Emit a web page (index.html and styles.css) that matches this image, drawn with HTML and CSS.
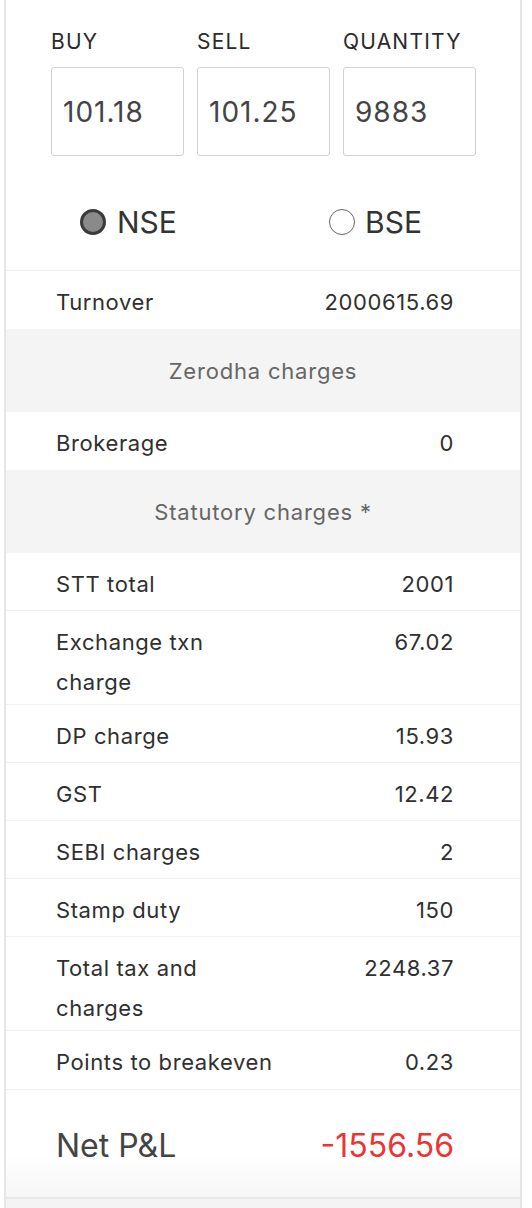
FILE: index.html
```html
<!DOCTYPE html>
<html lang="en">
<head>
    <meta charset="UTF-8">
    <title>Brokerage calculator</title>
    <link rel="stylesheet" href="styles.css">
</head>
<body>
    <div class="calc">
        <!-- inputs -->
        <div class="inputs">
            <div class="field">
                <label for="buy">BUY</label>
                <input type="text" id="buy" value="101.18">
            </div>
            <div class="field">
                <label for="sell">SELL</label>
                <input type="text" id="sell" value="101.25">
            </div>
            <div class="field">
                <label for="qty">QUANTITY</label>
                <input type="text" id="qty" value="9883">
            </div>
        </div>

        <div class="exchange">
            <label class="radio"><span class="dot checked"></span>NSE</label>
            <label class="radio"><span class="dot"></span>BSE</label>
        </div>

        <!-- results -->
        <div class="row"><div class="name">Turnover</div><div class="val">2000615.69</div></div>
        <div class="group">Zerodha charges</div>
        <div class="row"><div class="name">Brokerage</div><div class="val">0</div></div>
        <div class="group">Statutory charges *</div>
        <div class="row"><div class="name">STT total</div><div class="val">2001</div></div>
        <div class="row"><div class="name">Exchange txn charge</div><div class="val">67.02</div></div>
        <div class="row"><div class="name">DP charge</div><div class="val">15.93</div></div>
        <div class="row"><div class="name">GST</div><div class="val">12.42</div></div>
        <div class="row"><div class="name">SEBI charges</div><div class="val">2</div></div>
        <div class="row"><div class="name">Stamp duty</div><div class="val">150</div></div>
        <div class="row"><div class="name">Total tax and charges</div><div class="val">2248.37</div></div>
        <div class="row"><div class="name">Points to breakeven</div><div class="val">0.23</div></div>

        <div class="net">
            <div class="name">Net P&amp;L</div>
            <div class="val loss">-1556.56</div>
        </div>
        <div class="foot"></div>
    </div>
</body>
</html>
```

FILE: styles.css
```css
body { margin: 0; font-family: Inter, "Noto Sans", Arial, sans-serif; color: #333; background: #fff; }
.calc { margin-left: 4px; width: 518px; box-sizing: border-box; border-left: 2px solid #e6e6e6; border-right: 2px solid #e6e6e6; }

.inputs { display: flex; gap: 13px; padding: 28px 0 0 45px; }
.field label { display: block; font-size: 21px; line-height: 28px; letter-spacing: 1.2px; color: #2a2a2a; margin-bottom: 11px; }
.field input { width: 133px; height: 89px; box-sizing: border-box; border: 1.5px solid #d0d0d0; border-radius: 3px; padding: 0 11px; font-family: inherit; font-size: 28px; letter-spacing: 1px; color: #444; outline: none; }

.exchange { display: flex; padding: 46px 0 0 74px; height: 68px; border-bottom: 1px solid #eee; }
.radio { display: flex; align-items: center; flex-shrink: 0; height: 40px; font-size: 30px; color: #333; gap: 11px; }
.radio:first-child { width: 249px; }
.radio:last-child { gap: 10px; }
.dot { width: 26px; height: 26px; box-sizing: border-box; border-radius: 50%; border: 1.5px solid #666; background: #fff; }
.dot.checked { border: 3.5px solid #3a3a3a; background: #8a8a8a; }

.row { display: flex; justify-content: space-between; align-items: flex-start; min-height: 58px; box-sizing: border-box; padding: 11px 66px 2px 50px; border-bottom: 1px solid #f0f0f0; font-size: 22px; line-height: 40px; letter-spacing: 0.6px; color: #2f2f2f; }
.row .name { max-width: 222px; }
.row .val { text-align: right; }
.row:has(+ .group), .row:has(+ .net) { border-bottom: none; }

.group { background: #f4f4f4; height: 83px; display: flex; align-items: center; justify-content: center; font-size: 22px; letter-spacing: 0.8px; color: #666; }

.net { display: flex; justify-content: space-between; align-items: center; height: 110px; box-sizing: border-box; padding: 4px 66px 0 50px; border-top: 1px solid #f0f0f0; border-bottom: 2px solid #e8e8e8; background: linear-gradient(to bottom, #fff 60%, #f6f6f6 100%); font-size: 32px; color: #444; }
.net .loss { color: #ee3333; }

.foot { height: 60px; background: #f4f4f4; }
```
